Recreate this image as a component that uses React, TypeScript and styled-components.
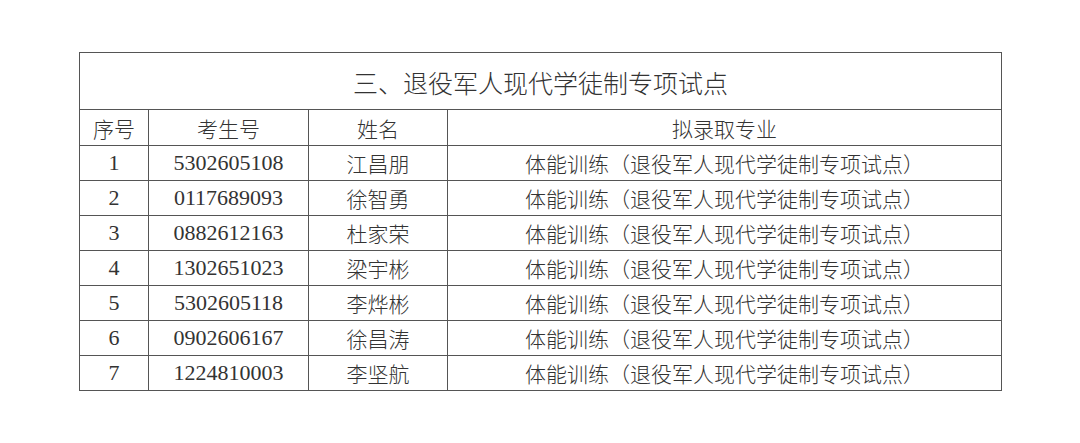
import React from "react";
import styled, { createGlobalStyle } from "styled-components";

const GlobalStyle = createGlobalStyle`
  html, body {
    margin: 0;
    padding: 0;
    background: #fff;
  }
  body {
    font-family: "Liberation Serif", "Noto Sans CJK SC", serif;
    color: #333;
  }
`;

const rows = [
  ["1", "5302605108", "江昌朋"],
  ["2", "0117689093", "徐智勇"],
  ["3", "0882612163", "杜家荣"],
  ["4", "1302651023", "梁宇彬"],
  ["5", "5302605118", "李烨彬"],
  ["6", "0902606167", "徐昌涛"],
  ["7", "1224810003", "李坚航"],
];

const major = "体能训练（退役军人现代学徒制专项试点）";

const Page = styled.div`
  width: 1080px;
  height: 443px;
  padding: 52px 0 0 79px;
  box-sizing: border-box;
`;

const Table = styled.table`
  border-collapse: collapse;
  table-layout: fixed;
  width: 922px;
  font-size: 21px;
  font-weight: 300;
`;

const TitleCell = styled.td`
  height: 54px;
  border: 1px solid #555;
  text-align: center;
  font-size: 25px;
  padding: 0;
  padding-top: 2px;
`;

const Cell = styled.td<{ $h?: number; $num?: boolean }>`
  height: ${(p) => p.$h ?? 34}px;
  border: 1px solid #555;
  text-align: center;
  padding: 0;
  white-space: nowrap;
  font-size: ${(p) => (p.$num ? "22px" : "inherit")};
`;

export default function App() {
  return (
    <>
      <GlobalStyle />
      <Page>
        <Table>
          <colgroup>
            <col style={{ width: 69 }} />
            <col style={{ width: 160 }} />
            <col style={{ width: 139 }} />
            <col style={{ width: 554 }} />
          </colgroup>
          <tbody>
            <tr>
              <TitleCell colSpan={4}>三、退役军人现代学徒制专项试点</TitleCell>
            </tr>
            <tr>
              <Cell $h={35}>序号</Cell>
              <Cell $h={35}>考生号</Cell>
              <Cell $h={35}>姓名</Cell>
              <Cell $h={35}>拟录取专业</Cell>
            </tr>
            {rows.map(([no, id, name]) => (
              <tr key={no}>
                <Cell $num>{no}</Cell>
                <Cell $num>{id}</Cell>
                <Cell>{name}</Cell>
                <Cell>{major}</Cell>
              </tr>
            ))}
          </tbody>
        </Table>
      </Page>
    </>
  );
}
